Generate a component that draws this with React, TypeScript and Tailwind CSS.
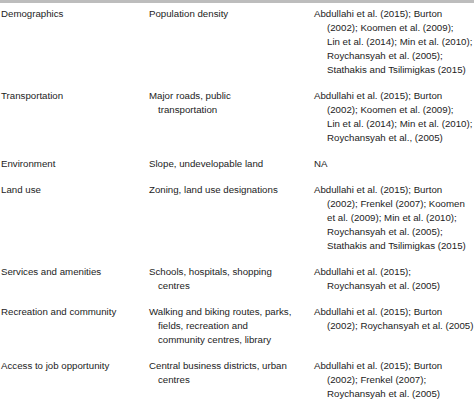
type Row = { factor: string; indicators: string[]; sources: string[] };

const rows: Row[] = [
  {
    factor: "Demographics",
    indicators: ["Population density"],
    sources: [
      "Abdullahi et al. (2015); Burton",
      "(2002); Koomen et al. (2009);",
      "Lin et al. (2014); Min et al. (2010);",
      "Roychansyah et al. (2005);",
      "Stathakis and Tsilimigkas (2015)",
    ],
  },
  {
    factor: "Transportation",
    indicators: ["Major roads, public", "transportation"],
    sources: [
      "Abdullahi et al. (2015); Burton",
      "(2002); Koomen et al. (2009);",
      "Lin et al. (2014); Min et al. (2010);",
      "Roychansyah et al., (2005)",
    ],
  },
  {
    factor: "Environment",
    indicators: ["Slope, undevelopable land"],
    sources: ["NA"],
  },
  {
    factor: "Land use",
    indicators: ["Zoning, land use designations"],
    sources: [
      "Abdullahi et al. (2015); Burton",
      "(2002); Frenkel (2007); Koomen",
      "et al. (2009); Min et al. (2010);",
      "Roychansyah et al. (2005);",
      "Stathakis and Tsilimigkas (2015)",
    ],
  },
  {
    factor: "Services and amenities",
    indicators: ["Schools, hospitals, shopping", "centres"],
    sources: ["Abdullahi et al. (2015);", "Roychansyah et al. (2005)"],
  },
  {
    factor: "Recreation and community",
    indicators: ["Walking and biking routes, parks,", "fields, recreation and", "community centres, library"],
    sources: ["Abdullahi et al. (2015); Burton", "(2002); Roychansyah et al. (2005)"],
  },
  {
    factor: "Access to job opportunity",
    indicators: ["Central business districts, urban", "centres"],
    sources: ["Abdullahi et al. (2015); Burton", "(2002); Frenkel (2007);", "Roychansyah et al. (2005)"],
  },
];

// first line flush, the rest hang under it
function Lines({ lines, indent }: { lines: string[]; indent: "small" | "large" }) {
  return (
    <div>
      {lines.map((line, i) => (
        <div
          key={i}
          className={`whitespace-nowrap ${i > 0 ? (indent === "small" ? "pl-[9px]" : "pl-[13px]") : ""}`}
        >
          {line}
        </div>
      ))}
    </div>
  );
}

export default function App() {
  return (
    <div
      className="w-[474px] h-[403px] overflow-hidden bg-white text-[#1c1c1c] text-[9.7px] leading-[14px]"
      style={{ fontFamily: "'Liberation Sans', Arial, sans-serif" }}
    >
      <div className="h-[3px] bg-[#bdbdbd]" />
      {rows.map((row) => (
        <div key={row.factor} className="flex pt-[4px] pb-[8px]">
          <div className="w-[149px] shrink-0 pl-[1px] whitespace-nowrap">{row.factor}</div>
          <div className="w-[165px] shrink-0">
            <Lines lines={row.indicators} indent="small" />
          </div>
          <div className="flex-1 min-w-0">
            <Lines lines={row.sources} indent="large" />
          </div>
        </div>
      ))}
    </div>
  );
}
